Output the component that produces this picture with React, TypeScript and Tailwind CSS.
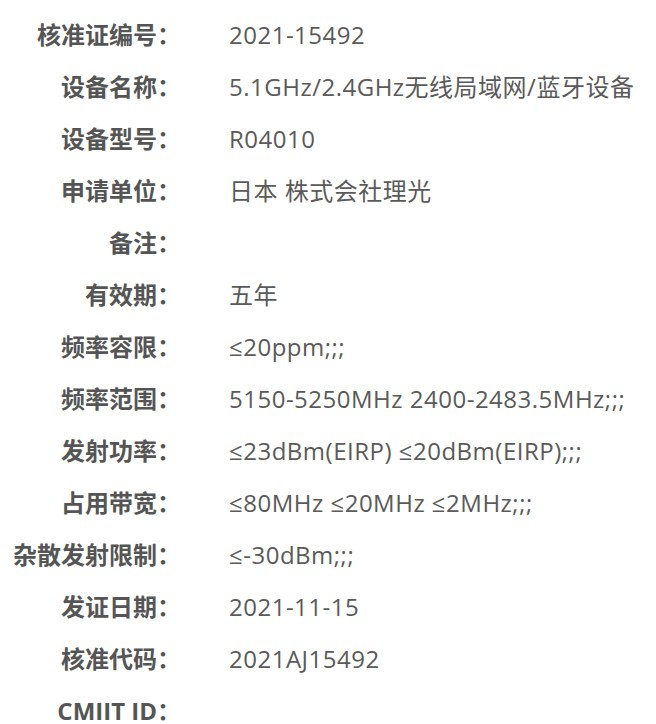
const rows: [string, string][] = [
  ['核准证编号：', '2021-15492'],
  ['设备名称：', '5.1GHz/2.4GHz无线局域网/蓝牙设备'],
  ['设备型号：', 'R04010'],
  ['申请单位：', '日本 株式会社理光'],
  ['备注：', ''],
  ['有效期：', '五年'],
  ['频率容限：', '≤20ppm;;;'],
  ['频率范围：', '5150-5250MHz 2400-2483.5MHz;;;'],
  ['发射功率：', '≤23dBm(EIRP) ≤20dBm(EIRP);;;'],
  ['占用带宽：', '≤80MHz ≤20MHz ≤2MHz;;;'],
  ['杂散发射限制：', '≤-30dBm;;;'],
  ['发证日期：', '2021-11-15'],
  ['核准代码：', '2021AJ15492'],
  ['CMIIT ID：', ''],
];

export default function App() {
  return (
    <div
      className="w-[656px] h-[724px] overflow-hidden bg-white pt-[9px] text-[24px] text-[#555]"
      style={{ fontFamily: '"Open Sans", "Noto Sans CJK SC", sans-serif' }}
    >
      {rows.map(([label, value]) => (
        <div key={label} className="flex h-[52px] items-center">
          <div className="w-[181px] shrink-0 text-right font-bold">{label}</div>
          <div className="ml-[48px] whitespace-nowrap tracking-[0.5px] text-[#5a5a5a]">{value}</div>
        </div>
      ))}
    </div>
  );
}
